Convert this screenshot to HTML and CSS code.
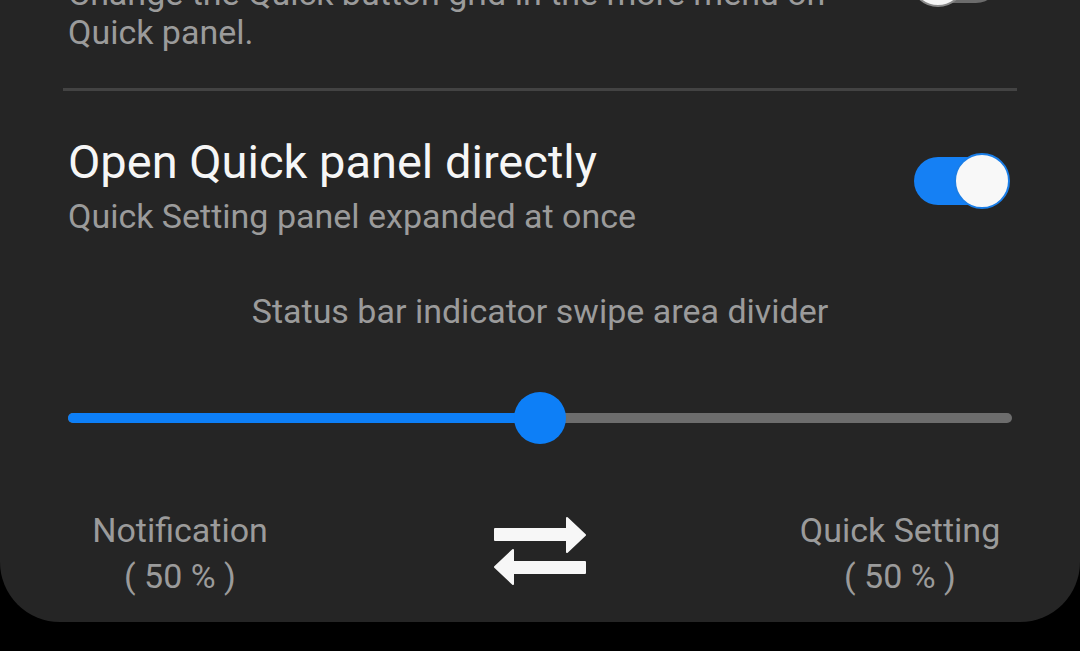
FILE: index.html
```html
<!DOCTYPE html>
<html lang="en">
<head>
    <meta charset="UTF-8">
    <meta name="viewport" content="width=device-width, initial-scale=1.0">
    <title>Quick panel</title>
    <link rel="stylesheet" href="styles.css">
</head>
<body>

    <div class="panel">
        <div class="setting setting-cut">
            <div class="setting-text">
                <div class="setting-desc">Change the Quick button grid in the more menu on Quick panel.</div>
            </div>
            <div class="toggle toggle-top"><span class="track"></span><span class="thumb"></span></div>
        </div>

        <div class="divider"></div>

        <div class="setting setting-main">
            <div class="setting-text">
                <div class="setting-title">Open Quick panel directly</div>
                <div class="setting-desc">Quick Setting panel expanded at once</div>
            </div>
            <div class="toggle toggle-main on"><span class="track"></span><span class="thumb"></span></div>
        </div>

        <div class="slider-label">Status bar indicator swipe area divider</div>

        <div class="slider">
            <div class="slider-track">
                <div class="slider-fill" style="width: 50%"></div>
            </div>
            <div class="slider-thumb" style="left: 50%"></div>
        </div>

        <div class="split">
            <div class="split-side">Notification<br>( 50 % )</div>
            <div class="split-icon">
                <svg width="92" height="70" viewBox="0 0 92 70">
                    <rect x="0" y="11" width="75" height="13" rx="1" fill="#f7f7f7"/>
                    <path d="M73 1 L91 18 L73 35 Z" fill="#f7f7f7" stroke="#f7f7f7" stroke-width="2" stroke-linejoin="round"/>
                    <rect x="17" y="44" width="75" height="13" rx="1" fill="#f7f7f7"/>
                    <path d="M19 33 L1 50 L19 67 Z" fill="#f7f7f7" stroke="#f7f7f7" stroke-width="2" stroke-linejoin="round"/>
                </svg>
            </div>
            <div class="split-side">Quick Setting<br>( 50 % )</div>
        </div>
    </div>

</body>
</html>
```

FILE: styles.css
```css
body {
    margin: 0;
    background: #000;
    font-family: Roboto, "Noto Sans", sans-serif;
    overflow: hidden;
}

.panel {
    width: 1080px;
    height: 622px;
    box-sizing: border-box;
    padding: 0 63px;
    background: #252525;
    border-radius: 0 0 60px 60px;
    overflow: hidden;
}

.setting {
    display: flex;
    align-items: flex-start;
    justify-content: space-between;
    padding-left: 5px;
}

.setting-text {
    flex: 1;
}

.setting-title {
    font-size: 47px;
    line-height: 56px;
    color: #f6f6f6;
}

.setting-desc {
    font-size: 34px;
    line-height: 44px;
    color: #9b9b9b;
}

.setting-cut {
    margin-top: -26px;
    padding-bottom: 36px;
}

.setting-cut .setting-desc {
    width: 820px;
    line-height: 39px;
}

.setting-main {
    padding-top: 43px;
}

.setting-main .setting-desc {
    margin-top: 4px;
}

.divider {
    height: 3px;
    background: #434343;
}

.toggle {
    position: relative;
    width: 100px;
    height: 56px;
    margin-right: 7px;
    flex-shrink: 0;
}

.toggle-top {
    margin-top: -23px;
}

.toggle-main {
    margin-top: 19px;
}

.track {
    position: absolute;
    left: 4px;
    top: 4px;
    width: 86px;
    height: 48px;
    border-radius: 24px;
    background: #6c6c6c;
}

.thumb {
    position: absolute;
    left: 0;
    top: 0;
    width: 52px;
    height: 52px;
    border-radius: 50%;
    background: #f5f5f5;
    border: 2px solid #8a8a8a;
}

.toggle.on .track {
    background: #1580f4;
}

.toggle.on .thumb {
    left: 44px;
    background: #f8f8f8;
    border-color: #1a7ee8;
}

.slider-label {
    margin-top: 51px;
    text-align: center;
    font-size: 34px;
    line-height: 44px;
    color: #9b9b9b;
}

.slider {
    position: relative;
    margin: 57px 5px 0;
    height: 56px;
    display: flex;
    align-items: center;
}

.slider-track {
    width: 100%;
    height: 10px;
    border-radius: 5px;
    background: #6d6d6d;
    overflow: hidden;
}

.slider-fill {
    height: 100%;
    background: #0d7ff7;
}

.slider-thumb {
    position: absolute;
    top: 2px;
    width: 52px;
    height: 52px;
    margin-left: -26px;
    border-radius: 50%;
    background: #0d7ff7;
}

.split {
    display: grid;
    grid-template-columns: 234px 1fr 234px;
    margin-top: 61px;
}

.split-side {
    text-align: center;
    font-size: 34px;
    line-height: 46px;
    color: #9b9b9b;
}

.split-icon {
    display: flex;
    justify-content: center;
    padding-top: 10px;
}
```
